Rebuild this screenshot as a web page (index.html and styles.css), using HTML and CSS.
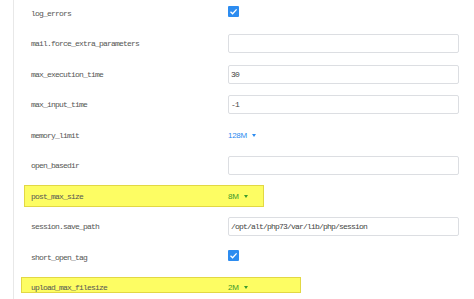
FILE: index.html
```html
<!DOCTYPE html>
<html lang="en">
<head>
    <meta charset="UTF-8">
    <title>PHP Options</title>
    <link rel="stylesheet" href="styles.css">
</head>
<body>

    <div class="options">
        <div class="row">
            <span class="name">log_errors</span>
            <span class="check"><svg viewBox="0 0 11 11" width="11" height="11"><path d="M2.5 5.8 L4.6 7.8 L8.6 3.4" fill="none" stroke="#fff" stroke-width="1.3"/></svg></span>
        </div>
        <div class="row">
            <span class="name">mail.force_extra_parameters</span>
            <input class="field" type="text" value="">
        </div>
        <div class="row">
            <span class="name">max_execution_time</span>
            <input class="field" type="text" value="30">
        </div>
        <div class="row">
            <span class="name">max_input_time</span>
            <input class="field" type="text" value="-1">
        </div>
        <div class="row">
            <span class="name">memory_limit</span>
            <span class="select blue">128M <i class="caret"></i></span>
        </div>
        <div class="row">
            <span class="name">open_basedir</span>
            <input class="field" type="text" value="">
        </div>
        <div class="row">
            <span class="mark mark-post"></span>
            <span class="name">post_max_size</span>
            <span class="select green">8M <i class="caret"></i></span>
        </div>
        <div class="row">
            <span class="name">session.save_path</span>
            <input class="field" type="text" value="/opt/alt/php73/var/lib/php/session">
        </div>
        <div class="row">
            <span class="name">short_open_tag</span>
            <span class="check"><svg viewBox="0 0 11 11" width="11" height="11"><path d="M2.5 5.8 L4.6 7.8 L8.6 3.4" fill="none" stroke="#fff" stroke-width="1.3"/></svg></span>
        </div>
        <div class="row">
            <span class="mark mark-upload"></span>
            <span class="name">upload_max_filesize</span>
            <span class="select green">2M <i class="caret"></i></span>
        </div>
    </div>

</body>
</html>
```

FILE: styles.css
```css
body {
    margin: 0;
    background: white;
    font-family: "Liberation Mono", "DejaVu Sans Mono", monospace;
    overflow: hidden;
}
.options {
    margin: -2px 0 0 13px;
    border-left: 1px solid #e8e8e8;
    height: 301px;
    overflow: hidden;
}
.row {
    position: relative;
    display: flex;
    align-items: center;
    height: 30.5px;
}
.name {
    position: relative;
    width: 197px;
    padding-left: 17px;
    font-size: 8px;
    letter-spacing: -0.8px;
    color: #555;
}
.field {
    position: relative;
    box-sizing: border-box;
    width: 231px;
    height: 19px;
    margin: 0;
    padding: 0 2px;
    border: 1px solid #dcdee2;
    border-radius: 2px;
    font-family: "Liberation Mono", "DejaVu Sans Mono", monospace;
    font-size: 8px;
    letter-spacing: -0.8px;
    color: #444;
    outline: none;
}
.check {
    position: relative;
    display: flex;
    width: 11px;
    height: 11px;
    margin-top: -3px;
    background: #2d8cf0;
    border-radius: 1px;
}
.select {
    position: relative;
    display: flex;
    align-items: center;
    font-family: "Liberation Sans", Arial, sans-serif;
    font-size: 8px;
    letter-spacing: -0.3px;
}
.blue {
    color: #2d8cf0;
}
.green {
    color: #3c9a2c;
}
.caret {
    width: 0;
    height: 0;
    margin-left: 5px;
    border-left: 2.5px solid transparent;
    border-right: 2.5px solid transparent;
    border-top: 3px solid currentColor;
}
.mark {
    position: absolute;
    box-sizing: border-box;
    background: #fdfd63;
    border: 1px solid #e2d844;
}
.mark-post {
    left: 10px;
    width: 240px;
    top: 4px;
    height: 22px;
}
.mark-upload {
    left: 7px;
    width: 280px;
    top: 4px;
    height: 16px;
}
```
